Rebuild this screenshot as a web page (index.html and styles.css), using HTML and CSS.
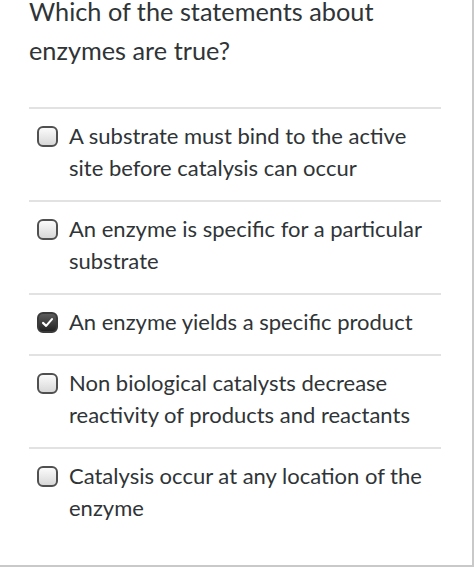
FILE: index.html
```html
<!DOCTYPE html>
<html>
<head>
<meta charset="utf-8">
<link rel="stylesheet" href="styles.css">
</head>
<body>
<div class="card">
  <div class="question">Which of the statements about enzymes are true?</div>
  <ul class="answers">
    <li class="answer"><span class="box"></span><span class="label">A substrate must bind to the active site before catalysis can occur</span></li>
    <li class="answer"><span class="box"></span><span class="label">An enzyme is specific for a particular substrate</span></li>
    <li class="answer"><span class="box checked"><svg viewBox="0 0 20 20" width="15" height="15"><path d="M4 10.5 L8.2 14.5 L16 5.5" fill="none" stroke="#fff" stroke-width="2.8" stroke-linecap="round" stroke-linejoin="round"/></svg></span><span class="label">An enzyme yields a specific product</span></li>
    <li class="answer"><span class="box"></span><span class="label">Non biological catalysts decrease reactivity of products and reactants</span></li>
    <li class="answer"><span class="box"></span><span class="label">Catalysis occur at any location of the enzyme</span></li>
  </ul>
</div>
</body>
</html>
```

FILE: styles.css
```css
html, body {
  margin: 0;
  padding: 0;
  background: #fff;
}
body {
  width: 474px;
  height: 580px;
  overflow: hidden;
  font-family: Lato, "Open Sans", sans-serif;
  color: #2f3437;
}
.card {
  box-sizing: border-box;
  width: 474px;
  height: 575px;
  border-right: 2px solid #c9c9c9;
  border-bottom: 2px solid #c9c9c9;
  padding: 0 31px 0 29px;
}
.question {
  font-size: 25.3px;
  line-height: 39px;
  margin-top: -8px;
  padding-bottom: 37px;
  padding-right: 50px;
}
.answers {
  list-style: none;
  margin: 0;
  padding: 0;
}
.answer {
  display: flex;
  align-items: flex-start;
  gap: 11px;
  border-top: 2px solid #e2e2e2;
  padding: 11px 0 16px 8px;
  font-size: 22px;
  line-height: 32px;
}
.box {
  flex: none;
  box-sizing: border-box;
  width: 21px;
  height: 21px;
  margin-top: 6px;
  border: 2px solid #505050;
  border-radius: 6px;
  background: linear-gradient(#fbfbfb, #d8d8d8);
  display: flex;
  align-items: center;
  justify-content: center;
}
.box.checked {
  background: linear-gradient(#5c5c5c, #222);
  border-color: #3a3a3a;
}
.label {
  flex: 1;
}
```
